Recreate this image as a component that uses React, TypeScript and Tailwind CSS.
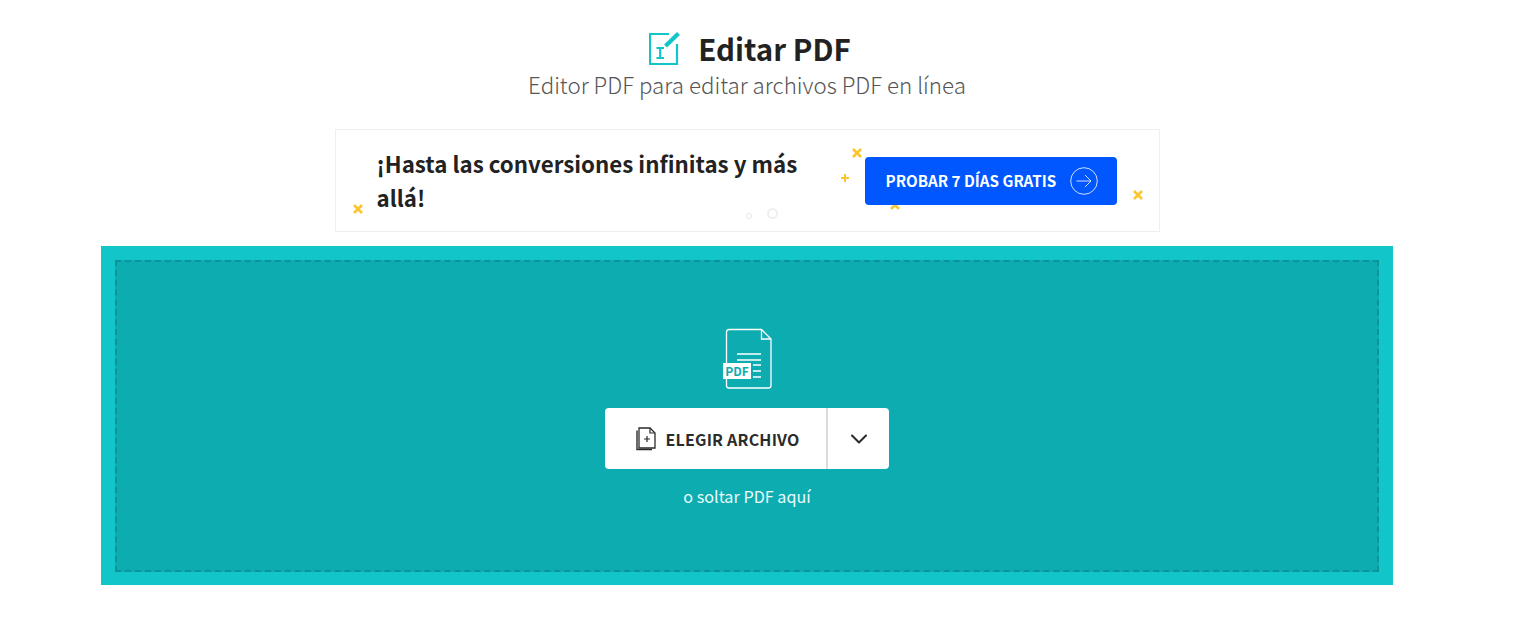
import { ChevronDown } from "lucide-react"

const font = { fontFamily: '"Noto Sans CJK JP", "Open Sans", sans-serif' }

function EditIcon() {
  return (
    <svg width="32" height="36" viewBox="0 0 32 36" fill="none" className="text-[#12c5c9]">
      <path d="M20 4H1V34H28V14" stroke="currentColor" strokeWidth="2.2" />
      <path d="M16.5 16L29.5 3.5" stroke="currentColor" strokeWidth="4.2" />
      <path d="M7.5 18H15M7.5 28H15M11.2 18V28" stroke="currentColor" strokeWidth="2.2" />
    </svg>
  )
}

function Cross({ className }: { className: string }) {
  return (
    <svg width="10" height="10" viewBox="0 0 10 10" className={"absolute text-[#fcc52f] " + className}>
      <path d="M1 1L9 9M9 1L1 9" stroke="currentColor" strokeWidth="2.6" />
    </svg>
  )
}

function PdfFileIcon() {
  return (
    <svg width="50" height="62" viewBox="0 0 50 62" fill="none" className="text-white">
      <path
        d="M7 1.5H39.5L49 11V57.5C49 59 48 60 46.5 60H7C5.5 60 4.5 59 4.5 57.5V4C4.5 2.5 5.5 1.5 7 1.5Z"
        stroke="currentColor"
        strokeWidth="1.3"
      />
      <path d="M39.5 1.5V11H49" stroke="currentColor" strokeWidth="1.3" />
      <path d="M15 26H39M15 32H39M31 37H39M31 43H39M31 49H39" stroke="currentColor" strokeWidth="1.3" />
      <rect x="1" y="35" width="28" height="16" fill="currentColor" />
      <text x="15" y="47.5" textAnchor="middle" fontSize="12" fontWeight="700" fill="#0dacb1">
        PDF
      </text>
    </svg>
  )
}

function FileAddIcon() {
  return (
    <svg width="20" height="24" viewBox="0 0 20 24" fill="none" className="text-[#2b2b2b]">
      <path d="M1 3.5V22.5H16" stroke="currentColor" strokeWidth="1.4" />
      <path d="M3 1H14L19 6V21H3V1Z" fill="white" stroke="currentColor" strokeWidth="1.3" />
      <path d="M14 1V6H19" stroke="currentColor" strokeWidth="1.2" />
      <path d="M8 12H14M11 9V15" stroke="currentColor" strokeWidth="1.2" />
    </svg>
  )
}

export default function App() {
  return (
    <div className="h-[626px] w-[1536px] overflow-hidden bg-white" style={font}>
      <div className="flex w-[1494px] flex-col items-center">
        <div className="mt-[29px] flex h-[38px] items-center gap-[17px] pl-[6px]">
          <EditIcon />
          <h1 className="text-[29.5px] leading-[38px] font-bold text-[#222]">Editar PDF</h1>
        </div>
        <p className="text-[22.3px] leading-[34px] font-light text-[#555]">
          Editor PDF para editar archivos PDF en línea
        </p>

        <div className="relative mt-[28px] flex h-[103px] w-[825px] items-center justify-between border border-[#efefef] bg-white pr-[42px] pl-[41px]">
          <p className="mb-[2px] w-[450px] text-[22.3px] leading-[34px] font-bold text-[#222]">
            ¡Hasta las conversiones infinitas y más allá!
          </p>
          <Cross className="top-[18px] left-[516px]" />
          <Cross className="top-[74px] left-[17px]" />
          <Cross className="top-[70px] left-[554px]" />
          <Cross className="top-[60px] left-[797px]" />
          <svg width="10" height="10" viewBox="0 0 10 10" className="absolute top-[43px] left-[504px] text-[#fcc52f]">
            <path d="M5 1V9M1 5H9" stroke="currentColor" strokeWidth="2" />
          </svg>
          <span className="absolute top-[83px] left-[410px] h-[6px] w-[6px] rounded-full border border-[#e8e8e8]" />
          <span className="absolute top-[78px] left-[431px] h-[11px] w-[11px] rounded-full border-2 border-[#efefef]" />
          <button className="relative flex h-[48px] w-[252px] items-center justify-between rounded-[4px] bg-[#0057ff] pr-[19px] pl-[21px] text-[15.2px] font-bold text-white">
            PROBAR 7 DÍAS GRATIS
            <svg width="28" height="28" viewBox="0 0 28 28" fill="none" className="text-white">
              <circle cx="14" cy="14" r="13.3" stroke="currentColor" strokeWidth="1" opacity="0.8" />
              <path d="M6.5 14H21M15 8L21 14L15 20" stroke="currentColor" strokeWidth="1" opacity="0.8" />
            </svg>
          </button>
        </div>

        <div className="mt-[14px] h-[339px] w-[1292px] bg-[#12c5c9] p-[14px]">
          <div className="flex h-[312px] flex-col items-center border-2 border-dashed border-[#0c939a] bg-[#0dacb1] pt-[66px]">
            <PdfFileIcon />
            <div className="mt-[18px] flex h-[61px] w-[284px] rounded-[4px] bg-white text-[#2b2b2b]">
              <div className="flex w-[223px] items-center justify-center gap-[9px] border-r-2 border-[#dcdcdc] pl-[5px] text-[16px] font-bold tracking-[0.2px]">
                <FileAddIcon />
                ELEGIR ARCHIVO
              </div>
              <div className="flex flex-1 items-center justify-center">
                <ChevronDown className="h-7 w-7" strokeWidth={1.8} />
              </div>
            </div>
            <p className="mt-[15px] text-[16.2px] leading-[24px] text-[#e6fbfb]">o soltar PDF aquí</p>
          </div>
        </div>
      </div>
    </div>
  )
}
